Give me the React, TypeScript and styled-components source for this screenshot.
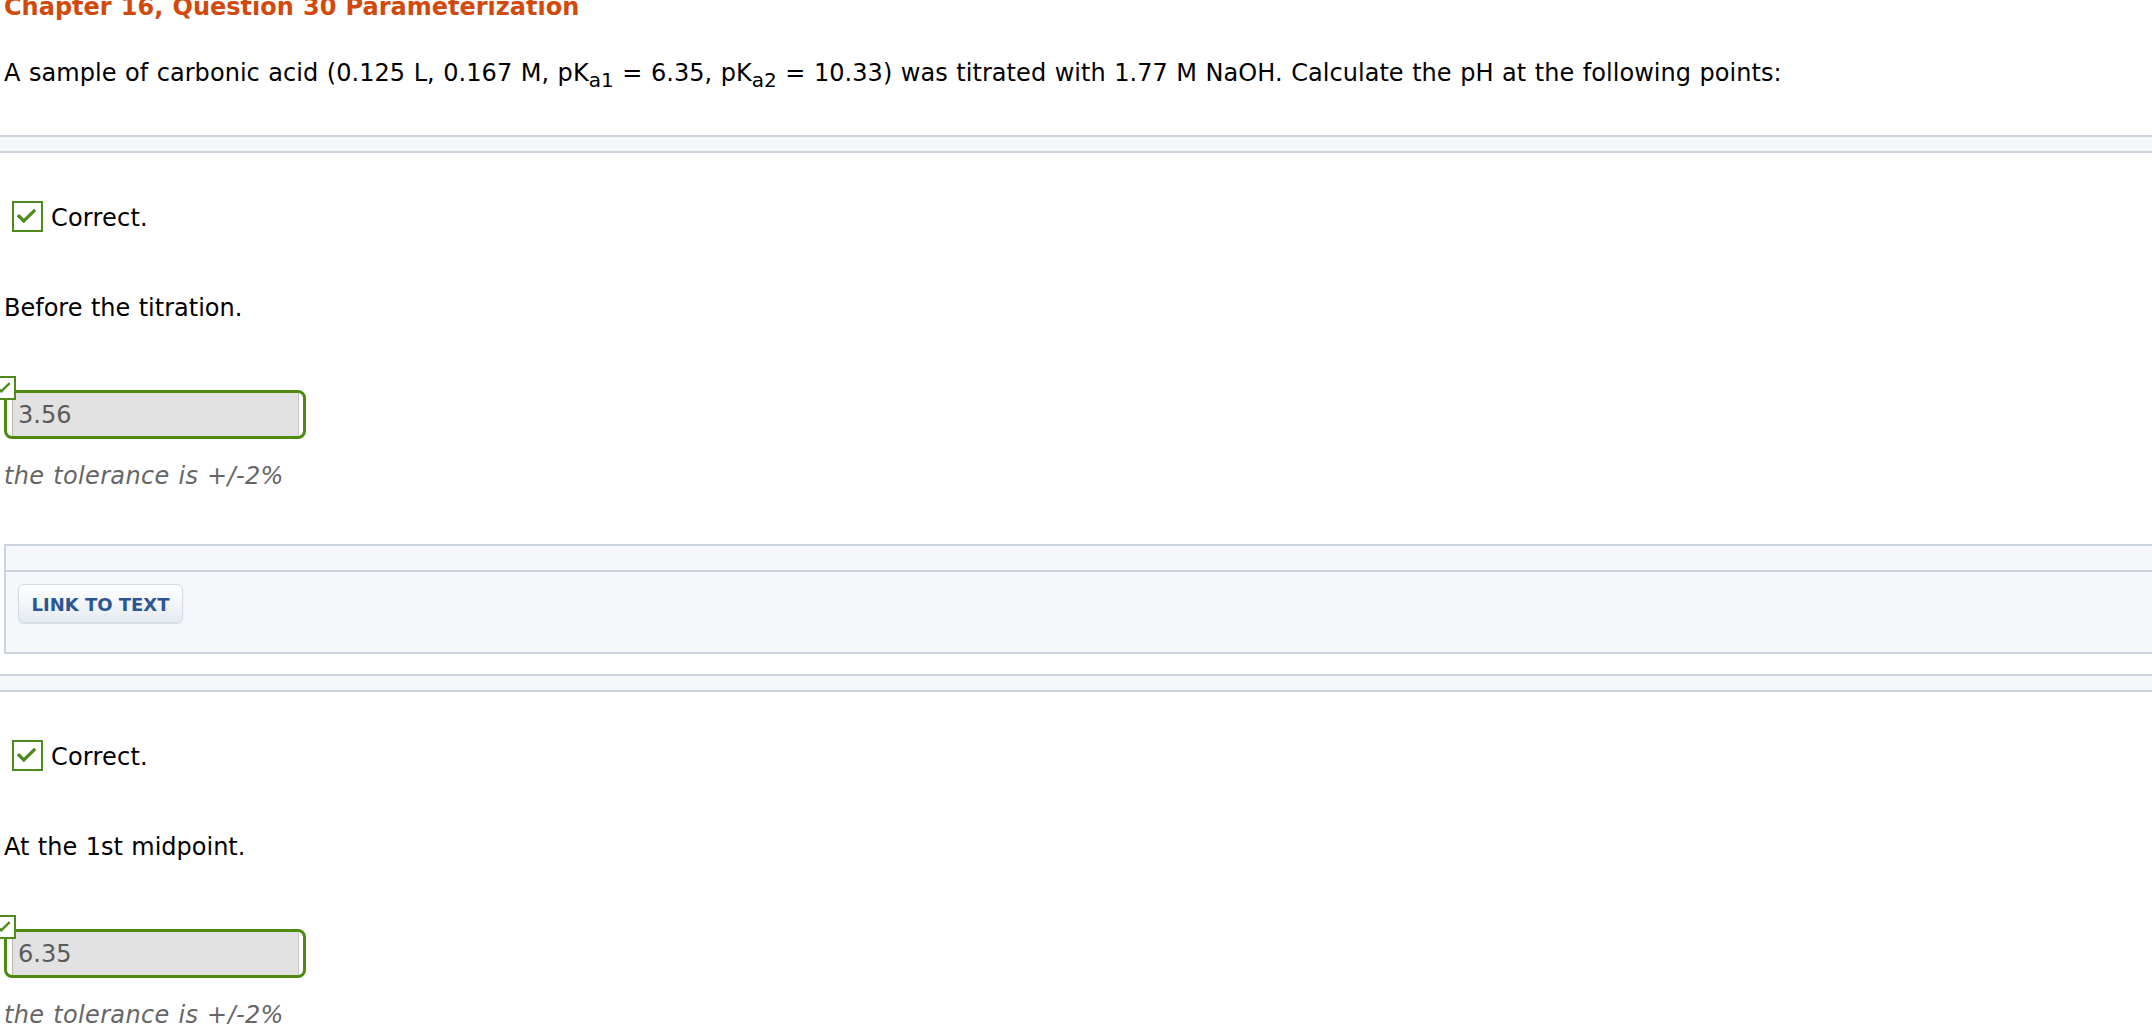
import React from "react";
import styled, { createGlobalStyle } from "styled-components";

const Global = createGlobalStyle`
  html, body { margin: 0; padding: 0; background: #ffffff; overflow: hidden; }
  body {
    font-family: "DejaVu Sans", Verdana, sans-serif;
    font-size: 24px;
    word-spacing: 0.8px;
    color: #000;
  }
`;

const Page = styled.div`
  display: flex;
  flex-direction: column;
  width: 100%;
`;

const Title = styled.h1`
  margin: -7px 0 0 0;
  padding-left: 4px;
  font-size: 24px;
  line-height: 28px;
  font-weight: bold;
  color: #d14a0b;
`;

const Question = styled.p`
  margin: 38px 0 0 0;
  padding-left: 4px;
  line-height: 28px;
  white-space: nowrap;
  letter-spacing: 0.05px;
`;

const Sub = styled.sub`
  font-size: 20px;
  line-height: 0;
  vertical-align: -6px;
`;

const Band = styled.div<{ $top: number }>`
  margin-top: ${(p) => p.$top}px;
  height: 14px;
  background: #f4f7fa;
  border-top: 2px solid #cbd3de;
  border-bottom: 2px solid #cbd3de;
`;

const Part = styled.section`
  display: flex;
  flex-direction: column;
  padding-top: 48px;
`;

const CheckRow = styled.div`
  display: flex;
  align-items: flex-start;
  gap: 8px;
  padding-left: 12px;
`;

const CheckBox = styled.span<{ $size: number }>`
  box-sizing: border-box;
  display: inline-flex;
  width: ${(p) => p.$size}px;
  height: ${(p) => p.$size}px;
  border: 2px solid #4f8a1c;
  background: #fff;
  flex-shrink: 0;
`;

const CheckLabel = styled.span`
  line-height: 31px;
  padding-top: 2px;
  letter-spacing: 0.2px;
`;

const Prompt = styled.div`
  margin-top: 60px;
  padding-left: 4px;
  line-height: 28px;
`;

const AnswerWrap = styled.div`
  position: relative;
  margin: 68px 0 0 4px;
  width: 302px;
`;

const AnswerBox = styled.div`
  box-sizing: border-box;
  display: flex;
  width: 302px;
  height: 49px;
  border: 3px solid #4f8a10;
  border-radius: 8px;
  padding: 0 4px 0 5px;
`;

const AnswerInput = styled.div`
  flex: 1;
  background: #e2e2e2;
  border-left: 1px solid #b9b9b9;
  border-right: 1px solid #c6c6c6;
  color: #5a5a5a;
  padding: 2px 0 0 5px;
  line-height: 41px;
`;

const MiniCheck = styled.span`
  position: absolute;
  left: -12px;
  top: -14px;
`;

const Tolerance = styled.div`
  margin-top: 23px;
  padding-left: 4px;
  line-height: 28px;
  font-style: italic;
  letter-spacing: 0.35px;
  color: #666666;
`;

const Panel = styled.div`
  margin: 54px 0 0 4px;
  background: #f5f8fb;
  border: 2px solid #cbd3de;
  border-right: none;
`;

const PanelHeader = styled.div`
  height: 24px;
  border-bottom: 2px solid #cbd3de;
`;

const PanelBody = styled.div`
  display: flex;
  padding: 12px 0 29px 12px;
`;

const LinkButton = styled.button`
  box-sizing: border-box;
  width: 165px;
  height: 39px;
  border: 1px solid #d2dae3;
  border-radius: 6px;
  background: linear-gradient(#ffffff, #e6ebf1);
  color: #2a5693;
  font-family: "DejaVu Sans", Verdana, sans-serif;
  font-weight: bold;
  font-size: 18px;
  padding: 1px 0 0 0;
  box-shadow: 0 1px 1px rgba(180, 195, 210, 0.5);
`;

const Tick = ({ size }: { size: number }) => (
  <svg width={size} height={size} viewBox="0 0 27 27" fill="none">
    <path d="M5 13.2 L9.8 18 L20 8" stroke="#4f8a1c" strokeWidth="3.2" strokeLinecap="square" />
  </svg>
);

const QuestionPart = ({ prompt, value }: { prompt: string; value: string }) => (
  <Part>
    <CheckRow>
      <CheckBox $size={31}>
        <Tick size={27} />
      </CheckBox>
      <CheckLabel>Correct.</CheckLabel>
    </CheckRow>
    <Prompt>{prompt}</Prompt>
    <AnswerWrap>
      <MiniCheck>
        <CheckBox $size={24}>
          <Tick size={20} />
        </CheckBox>
      </MiniCheck>
      <AnswerBox>
        <AnswerInput>{value}</AnswerInput>
      </AnswerBox>
    </AnswerWrap>
    <Tolerance>the tolerance is +/-2%</Tolerance>
  </Part>
);

export default function App() {
  return (
    <Page>
      <Global />
      <Title>Chapter 16, Question 30 Parameterization</Title>
      <Question>
        A sample of carbonic acid (0.125 L, 0.167 M, pK<Sub>a1</Sub> = 6.35, pK<Sub>a2</Sub> = 10.33) was
        titrated with 1.77 M NaOH. Calculate the pH at the following points:
      </Question>
      <Band $top={48} />
      <QuestionPart prompt="Before the titration." value="3.56" />
      <Panel>
        <PanelHeader />
        <PanelBody>
          <LinkButton>LINK TO TEXT</LinkButton>
        </PanelBody>
      </Panel>
      <Band $top={20} />
      <QuestionPart prompt="At the 1st midpoint." value="6.35" />
    </Page>
  );
}
